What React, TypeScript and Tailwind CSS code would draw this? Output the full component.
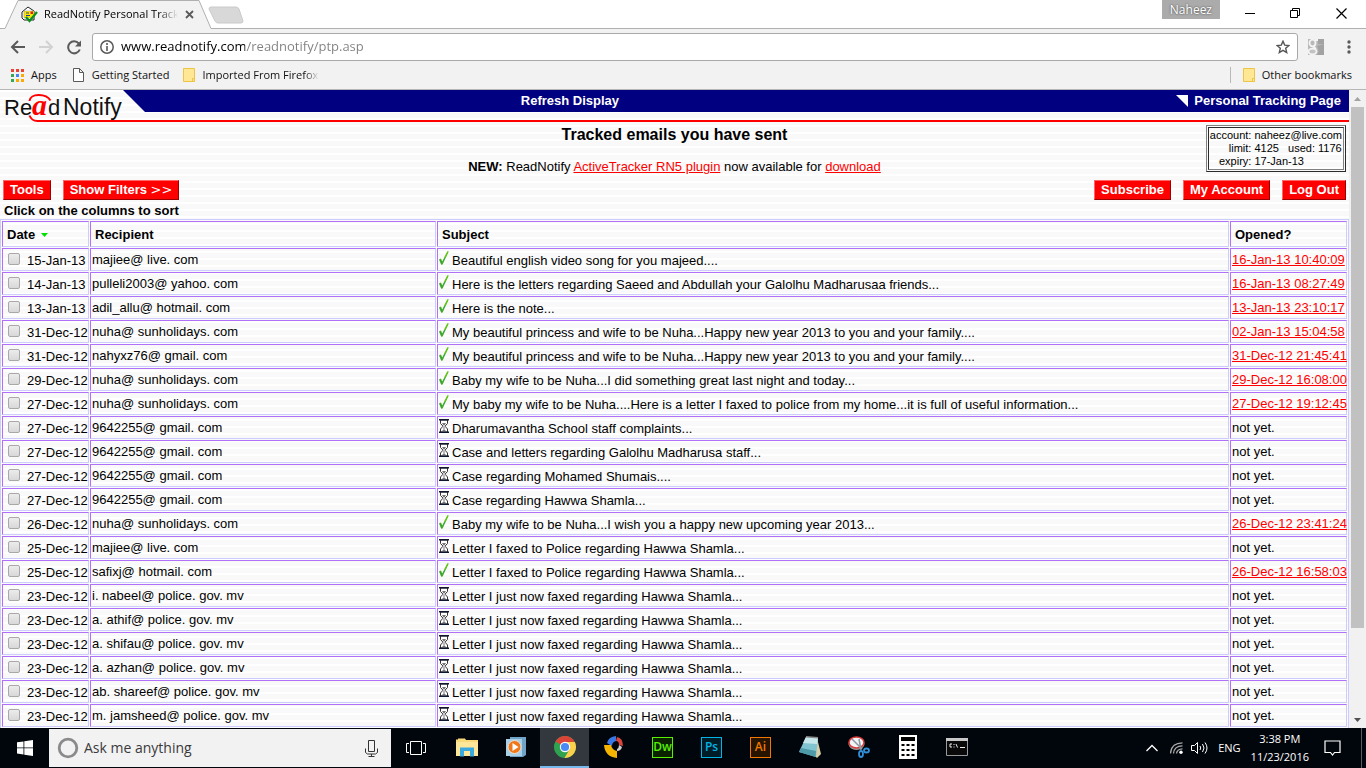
import type { ReactNode } from 'react'

type Row = { date: string; to: string; subject: string; opened?: string }

const ROWS: Row[] = [
  { date: '15-Jan-13', to: 'majiee@ live. com', subject: 'Beautiful english video song for you majeed....', opened: '16-Jan-13 10:40:09' },
  { date: '14-Jan-13', to: 'pulleli2003@ yahoo. com', subject: 'Here is the letters regarding Saeed and Abdullah your Galolhu Madharusaa friends...', opened: '16-Jan-13 08:27:49' },
  { date: '13-Jan-13', to: 'adil_allu@ hotmail. com', subject: 'Here is the note...', opened: '13-Jan-13 23:10:17' },
  { date: '31-Dec-12', to: 'nuha@ sunholidays. com', subject: 'My beautiful princess and wife to be Nuha...Happy new year 2013 to you and your family....', opened: '02-Jan-13 15:04:58' },
  { date: '31-Dec-12', to: 'nahyxz76@ gmail. com', subject: 'My beautiful princess and wife to be Nuha...Happy new year 2013 to you and your family....', opened: '31-Dec-12 21:45:41' },
  { date: '29-Dec-12', to: 'nuha@ sunholidays. com', subject: 'Baby my wife to be Nuha...I did something great last night and today...', opened: '29-Dec-12 16:08:00' },
  { date: '27-Dec-12', to: 'nuha@ sunholidays. com', subject: 'My baby my wife to be Nuha....Here is a letter I faxed to police from my home...it is full of useful information...', opened: '27-Dec-12 19:12:45' },
  { date: '27-Dec-12', to: '9642255@ gmail. com', subject: 'Dharumavantha School staff complaints...' },
  { date: '27-Dec-12', to: '9642255@ gmail. com', subject: 'Case and letters regarding Galolhu Madharusa staff...' },
  { date: '27-Dec-12', to: '9642255@ gmail. com', subject: 'Case regarding Mohamed Shumais....' },
  { date: '27-Dec-12', to: '9642255@ gmail. com', subject: 'Case regarding Hawwa Shamla...' },
  { date: '26-Dec-12', to: 'nuha@ sunholidays. com', subject: 'Baby my wife to be Nuha...I wish you a happy new upcoming year 2013...', opened: '26-Dec-12 23:41:24' },
  { date: '25-Dec-12', to: 'majiee@ live. com', subject: 'Letter I faxed to Police regarding Hawwa Shamla...' },
  { date: '25-Dec-12', to: 'safixj@ hotmail. com', subject: 'Letter I faxed to Police regarding Hawwa Shamla...', opened: '26-Dec-12 16:58:03' },
  { date: '23-Dec-12', to: 'i. nabeel@ police. gov. mv', subject: 'Letter I just now faxed regarding Hawwa Shamla...' },
  { date: '23-Dec-12', to: 'a. athif@ police. gov. mv', subject: 'Letter I just now faxed regarding Hawwa Shamla...' },
  { date: '23-Dec-12', to: 'a. shifau@ police. gov. mv', subject: 'Letter I just now faxed regarding Hawwa Shamla...' },
  { date: '23-Dec-12', to: 'a. azhan@ police. gov. mv', subject: 'Letter I just now faxed regarding Hawwa Shamla...' },
  { date: '23-Dec-12', to: 'ab. shareef@ police. gov. mv', subject: 'Letter I just now faxed regarding Hawwa Shamla...' },
  { date: '23-Dec-12', to: 'm. jamsheed@ police. gov. mv', subject: 'Letter I just now faxed regarding Hawwa Shamla...' },
]

const CELL = 'border border-t-[#b070f8] border-l-[#b070f8] border-r-[#ccccff] border-b-[#ccccff]'
const HEAD_CELL = `${CELL} px-1 pt-[2px]`

function Tick() {
  return (
    <svg width="10" height="15" viewBox="0 0 10 15" className="shrink-0">
      <path d="M0 8.5 L2 7.5 L3.2 10.5 L8.4 0.5 L9.6 0.5 L3.6 13.5 L2.2 13.8 Z" fill="#3fa82c" />
      <path d="M5.5 6 L8.4 0.5 L9.6 0.5 L6.8 6.5 Z" fill="#62c80a" />
    </svg>
  )
}

function Hourglass() {
  return (
    <svg width="10" height="15" viewBox="0 0 10 15" className="shrink-0">
      <path d="M1.500 1v3.500L4 7.200 1.500 10v3h7v-3L6 7.200l2.500-2.700V1z" fill="#fff" stroke="#333" />
      <path d="M3 4h4L5.500 6.500h-1zM4.500 8h1v2h-1zM3 12l2-2 2 2z" fill="#777" />
      <path d="M0 0h10v1.500H0zM0 12.500h10V14H0z" fill="#101830" />
    </svg>
  )
}

function RedButton({ children }: { children: ReactNode }) {
  return (
    <button className="h-5 border border-t-[#ff6666] border-l-[#ff6666] border-r-[#990000] border-b-[#990000] bg-[#ff0000] px-[6px] text-[13px] leading-[18px] font-bold text-white">
      {children}
    </button>
  )
}

function Folder() {
  return (
    <svg width="13" height="14" viewBox="0 0 13 14" className="shrink-0">
      <path d="M.5 .5h11v13h-11z" fill="#ffe793" stroke="#edc445" />
      <path d="M9.500 10.500h2v3h-2z" fill="#ffe793" stroke="#edc445" />
    </svg>
  )
}

function TabStrip() {
  return (
    <div className="flex h-[29px] items-stretch bg-white">
      <div className="grid w-[212px]">
        <svg width="212" height="29" viewBox="0 0 212 29" className="col-start-1 row-start-1">
          <path d="M0 28.500H5L18 .500H199L211 28.500H212V29H0z" fill="#f2f2f2" />
          <path d="M0 28.500H5L18 .500H199L211 28.500H212" fill="none" stroke="#b0b0b0" />
        </svg>
        <div className="col-start-1 row-start-1 flex items-center pl-[21px]">
          <svg width="18" height="17" viewBox="0 0 18 17" className="shrink-0">
            <path d="M1 6 L7 1 L13 5 V14 H3 L1 12z" fill="#fff" stroke="#222" />
            <path d="M3 5h10v7H3z" fill="#ffe800" stroke="#888" strokeWidth=".5" />
            <path d="M5 7h3M5 9.500h4" stroke="#2038a0" />
            <path d="M9.500 5.500h2.500v2.500H9.500z" fill="#e02020" />
            <path d="M5 11l3.500 4L16 6" fill="none" stroke="#0a9020" strokeWidth="2.200" />
          </svg>
          <span className="ml-[5px] w-[134px] overflow-hidden text-[11px] whitespace-nowrap [mask-image:linear-gradient(to_right,black_85%,transparent)]">
            ReadNotify Personal Track
          </span>
          <button aria-label="Close tab" className="ml-[7px]">
            <svg width="9" height="9" viewBox="0 0 9 9">
              <path d="M1 1l7 7M8 1L1 8" stroke="#5a5a5a" strokeWidth="1.800" />
            </svg>
          </button>
        </div>
      </div>
      <div className="flex flex-1 border-b border-[#b0b0b0]">
        <button aria-label="New tab" className="-ml-1 self-start pt-[6px]">
          <svg width="36" height="19" viewBox="0 0 36 19">
            <path d="M3 1h25q2 0 3 2l4 12q0 2-2 2H10q-2 0-3-2L1 3q0-2 2-2z" fill="#d8d8d8" stroke="#cacaca" />
          </svg>
        </button>
        <div className="ml-auto flex items-start">
          <button className="h-[19px] bg-[#ababab] px-2 text-xs leading-[18px] text-white [text-shadow:0_0_2px_#333]">Naheez</button>
          <button aria-label="Minimize" className="ml-[24px] grid h-[26px] w-[12px] place-items-center">
            <svg width="10" height="10"><path d="M0 5.500h10" stroke="#000" /></svg>
          </button>
          <button aria-label="Restore" className="ml-[33px] grid h-[26px] w-[12px] place-items-center">
            <svg width="10" height="10" fill="none" stroke="#000"><path d="M.5 2.500h7v7h-7zM2.500 2V.500h7v7H8" /></svg>
          </button>
          <button aria-label="Close" className="mr-[19px] ml-[34px] grid h-[26px] w-[12px] place-items-center">
            <svg width="11" height="11"><path d="M.5 .5l10 10M10.500 .5l-10 10" stroke="#000" strokeWidth="1.200" /></svg>
          </button>
        </div>
      </div>
    </div>
  )
}

function Toolbar() {
  return (
    <div className="flex h-9 items-center bg-[#f2f2f2] pl-[10px]">
      <button aria-label="Back">
        <svg width="16" height="14" viewBox="0 0 16 14" fill="none" stroke="#5a5a5a" strokeWidth="2"><path d="M15 7H2M8 1L2 7l6 6" /></svg>
      </button>
      <button aria-label="Forward" className="ml-[13px]">
        <svg width="16" height="14" viewBox="0 0 16 14" fill="none" stroke="#d2d2d2" strokeWidth="2"><path d="M0 7h13M7 1l6 6-6 6" /></svg>
      </button>
      <button aria-label="Reload" className="ml-3">
        <svg width="15" height="15" viewBox="0 0 15 15">
          <path d="M12.800 9.500A6 6 0 1 1 11.800 3.500" fill="none" stroke="#5a5a5a" strokeWidth="2" />
          <path d="M14 .5v6H8z" fill="#5a5a5a" />
        </svg>
      </button>
      <div className="ml-[10px] flex h-7 flex-1 items-center rounded-[3px] border border-[#a9a9a9] bg-white px-[7px]">
        <svg width="14" height="14" viewBox="0 0 14 14" fill="none" stroke="#5a5a5a" className="shrink-0">
          <circle cx="7" cy="7" r="6.200" strokeWidth="1.500" />
          <path d="M7 6v5M7 3v2" strokeWidth="1.600" />
        </svg>
        <input
          aria-label="Address"
          defaultValue="www.readnotify.com/readnotify/ptp.asp"
          className="ml-[7px] flex-1 bg-[linear-gradient(to_right,#000_124px,#808080_124px)] bg-clip-text text-[13px] text-transparent outline-none"
        />
        <button aria-label="Bookmark this page">
          <svg width="14" height="14" viewBox="0 0 14 14" fill="none" stroke="#555" strokeWidth="1.400">
            <path d="M7 1.200l1.700 3.900 4.200.4-3.200 2.800 1 4.200L7 10.300l-3.700 2.200 1-4.200L1.100 5.500l4.200-.4z" />
          </svg>
        </button>
      </div>
      <button aria-label="Google extension" className="ml-[10px]">
        <svg width="16" height="16" viewBox="0 0 16 16">
          <path d="M0 0h16v16H0z" fill="#b8b8b8" />
          <path d="M10 0h6v5h-6zM9 7l7-2v11H9q3-4 0-9z" fill="#a2a2a2" />
          <ellipse cx="4.500" cy="4" rx="3" ry="3.300" fill="#b8b8b8" stroke="#f4f4f4" strokeWidth="1.800" />
          <ellipse cx="4.500" cy="12.500" rx="4" ry="2.800" fill="#c2c2c2" stroke="#f4f4f4" strokeWidth="1.800" />
          <path d="M5 7.500l3 2.500M7 1h3" stroke="#f4f4f4" strokeWidth="1.800" />
        </svg>
      </button>
      <button aria-label="Menu" className="mr-[15px] ml-[23px]">
        <svg width="4" height="14" viewBox="0 0 4 14" fill="#5a5a5a"><circle cx="2" cy="2" r="1.700" /><circle cx="2" cy="7" r="1.700" /><circle cx="2" cy="12" r="1.700" /></svg>
      </button>
    </div>
  )
}

const APP_DOTS = ['#ea4335', '#ea4335', '#ea4335', '#34a853', '#4285f4', '#fbaa05', '#34a853', '#fbaa05', '#fbaa05']

function Bookmarks() {
  return (
    <div className="flex h-[25px] items-start border-b border-[#b6b6b6] bg-[#f2f2f2] pl-[11px] text-[11px] leading-5 text-[#111]">
      <a href="#apps" className="flex items-center">
        <span className="grid grid-cols-3 gap-[2px]">
          {APP_DOTS.map((c, i) => <span key={i} className="size-[3px]" style={{ background: c }} />)}
        </span>
        <span className="ml-[7px]">Apps</span>
      </a>
      <a href="#start" className="ml-4 flex items-center">
        <svg width="11" height="14" viewBox="0 0 11 14" fill="#fff" stroke="#5a5a5a"><path d="M.5 .5h6l4 4v9H.500zM6.500 .5v4h4" /></svg>
        <span className="ml-2">Getting Started</span>
      </a>
      <a href="#imported" className="ml-[14px] flex items-center">
        <Folder />
        <span className="ml-[6px] w-[117px] overflow-hidden whitespace-nowrap [mask-image:linear-gradient(to_right,black_88%,transparent)]">Imported From Firefox</span>
      </a>
      <a href="#other" className="mr-[14px] ml-auto flex items-center">
        <span className="mr-3 h-4 w-px bg-[#b8b8b8]" />
        <Folder />
        <span className="ml-[6px]">Other bookmarks</span>
      </a>
    </div>
  )
}

function PageHeader() {
  return (
    <header className="flex h-8">
      <svg width="145" height="32" viewBox="0 0 145 32" className="shrink-0 overflow-visible">
        <path d="M123 0h22v22z" fill="#000080" />
        <path d="M29.500 11C30 3 46 3 50.500 10.500M29.500 25.500q2 5.500 8 5.500H145" fill="none" stroke="#ff0000" strokeWidth="2" />
        <g fontFamily="'Liberation Sans', sans-serif" fill="#111">
          <text x="4" y="25" fontSize="22">Re</text>
          <text x="48" y="25" fontSize="22">d</text>
          <text x="63" y="25" fontSize="23">Notify</text>
        </g>
        <text x="32" y="25" fontFamily="'Liberation Serif', serif" fontStyle="italic" fontWeight="bold" fontSize="30" fill="#ff0000">a</text>
      </svg>
      <div className="flex min-w-0 flex-1 flex-col justify-between border-b-2 border-[#ff0000]">
        <div className="grid h-[22px] grid-cols-[12fr_5fr] items-center bg-[#000080] text-[13px] font-bold text-white">
          <a href="#refresh" className="justify-self-center">Refresh Display</a>
          <span className="mr-2 flex items-center justify-self-end">
            <svg width="12" height="12" className="mr-[6px]"><path d="M0 0h12v12z" fill="#fff" /></svg>
            Personal Tracking Page
          </span>
        </div>
      </div>
    </header>
  )
}

function AccountBox() {
  return (
    <div className="justify-self-end border border-t-[#808080] border-l-[#808080] border-r-[#2c2c2c] border-b-[#2c2c2c] p-px">
      <dl className="grid grid-cols-[auto_auto] gap-x-[3px] border border-t-[#2c2c2c] border-l-[#2c2c2c] border-r-[#808080] border-b-[#808080] px-px py-px text-[11px] leading-[13px] whitespace-pre">
        <dt className="text-right">account:</dt><dd>naheez@live.com</dd>
        <dt className="text-right">limit:</dt><dd>4125   used: 1176</dd>
        <dt className="text-right">expiry:</dt><dd>17-Jan-13</dd>
      </dl>
    </div>
  )
}

function TrackedTable() {
  return (
    <table className="w-full table-fixed border-separate border-spacing-px border border-[#ccccff]">
      <colgroup>
        <col className="w-[87px]" />
        <col className="w-[346px]" />
        <col />
        <col className="w-[117px]" />
      </colgroup>
      <thead>
        <tr className="h-[26px] text-left">
          <th className={HEAD_CELL}>
            <span className="flex items-center gap-[6px]">
              Date
              <svg width="7" height="4"><path d="M0 0h7L3.500 4z" fill="#00e000" /></svg>
            </span>
          </th>
          <th className={HEAD_CELL}>Recipient</th>
          <th className={HEAD_CELL}>Subject</th>
          <th className={HEAD_CELL}>Opened?</th>
        </tr>
      </thead>
      <tbody className="leading-5 whitespace-nowrap">
        {ROWS.map((r, i) => (
          <tr key={i} className="h-[23px]">
            <td className={`${CELL} pl-[5px]`}>
              <label className="flex items-start leading-[18px]">
                <input type="checkbox" className="mt-1 mr-[7px] size-3 shrink-0 appearance-none rounded-[2px] border border-[#a8a8a8] bg-linear-to-b from-[#ececec] to-[#d8d8d8]" />
                <span className="pt-[3px]">{r.date}</span>
              </label>
            </td>
            <td className={`${CELL} pl-px`}>{r.to}</td>
            <td className={`${CELL} pl-px`}>
              <span className="flex items-start gap-[3px] leading-[18px]">
                <span className="pt-[2px]">{r.opened ? <Tick /> : <Hourglass />}</span>
                <span className="pt-[3px]">{r.subject}</span>
              </span>
            </td>
            <td className={`${CELL} pl-px`}>
              {r.opened ? <a href="#opened" className="text-[#ff0000] underline">{r.opened}</a> : 'not yet.'}
            </td>
          </tr>
        ))}
      </tbody>
    </table>
  )
}

function Scrollbar() {
  return (
    <div className="flex w-[17px] shrink-0 flex-col items-center bg-[#f1f1f1]">
      <span className="grid h-[17px] place-items-center"><svg width="7" height="4"><path d="M0 4h7L3.500 0z" fill="#a3a3a3" /></svg></span>
      <span className="w-[13px] basis-[521px] bg-[#c1c1c1]" />
      <span className="mt-auto grid h-[17px] place-items-center"><svg width="7" height="4"><path d="M0 0h7L3.500 4z" fill="#505050" /></svg></span>
    </div>
  )
}

function Adobe({ label, color, bg }: { label: string; color: string; bg: string }) {
  return (
    <span className="grid size-[21px] place-items-center border text-xs leading-none font-semibold" style={{ color, borderColor: color, background: bg }}>
      {label}
    </span>
  )
}

const APPS: { name: string; icon: ReactNode; active?: boolean }[] = [
  {
    name: 'File Explorer',
    icon: (
      <svg width="22" height="19" viewBox="0 0 22 19">
        <path d="M0 1.500h2V.500h7l1 1.500h12v16H0z" fill="#f9d978" />
        <path d="M0 4h22v14H0z" fill="#ffe79a" />
        <path d="M4 9.500h14V18.500h-4V13H8v5.500H4z" fill="#3aa9e0" />
      </svg>
    ),
  },
  {
    name: 'Media Player',
    icon: (
      <svg width="20" height="20" viewBox="0 0 20 20">
        <path d="M4 0h16v18l-3 2H4z" fill="#6fa3c8" />
        <path d="M0 2h16v17H0z" fill="#a9cfe8" />
        <circle cx="8.500" cy="10" r="6.500" fill="#f07818" stroke="#e8e0d8" />
        <path d="M6.500 6l6 4-6 4z" fill="#fff" />
      </svg>
    ),
  },
  {
    name: 'Chrome',
    active: true,
    icon: (
      <svg width="22" height="22" viewBox="0 0 22 22">
        <circle cx="11" cy="11" r="11" fill="#2fa24f" />
        <path d="M11 11L1.500 5.500A11 11 0 0 1 20.500 5.500z" fill="#dc4437" />
        <path d="M11 6H20.800A11 11 0 0 1 10.500 22l5-8.500z" fill="#fcd04a" />
        <circle cx="11" cy="11" r="5.200" fill="#fff" />
        <circle cx="11" cy="11" r="4.100" fill="#4a8af4" />
      </svg>
    ),
  },
  {
    name: 'Canary',
    icon: (
      <svg width="20" height="22" viewBox="0 0 20 22">
        <path d="M3 7A10 9 0 0 1 12 0v5q-4 1-4 5z" fill="#3b78e7" />
        <path d="M13 1q6 1 6 9l-4-1q0-4-3-4z" fill="#d8453a" />
        <path d="M0 9h7q1 5 6 6v7Q1 21 0 9z" fill="#f4b400" />
        <path d="M18 11q-1 4-5 4v-2q2-1 2-4z" fill="#d0d0d0" />
      </svg>
    ),
  },
  { name: 'Dreamweaver', icon: <Adobe label="Dw" color="#57f000" bg="#0a2200" /> },
  { name: 'Photoshop', icon: <Adobe label="Ps" color="#00b4e4" bg="#001c26" /> },
  { name: 'Illustrator', icon: <Adobe label="Ai" color="#f07800" bg="#261300" /> },
  {
    name: 'Notepad',
    icon: (
      <svg width="24" height="22" viewBox="0 0 24 22">
        <path d="M19 2l4 16-4 4-2-2z" fill="#d8cfa8" />
        <path d="M8 1l12 1-2 19L1 16z" fill="#7fc4d0" />
        <path d="M8 1l12 1-1 6L5 7z" fill="#c6e8ec" />
        <path d="M3 12l15 3-.5 6L1 16z" fill="#4d99a8" />
        <path d="M8 .8l12 1" stroke="#888" strokeWidth="1.500" />
      </svg>
    ),
  },
  {
    name: 'Snipping Tool',
    icon: (
      <svg width="22" height="22" viewBox="0 0 22 22" fill="none">
        <ellipse cx="8.500" cy="8" rx="8" ry="6" fill="#9b9b9b" />
        <ellipse cx="8.500" cy="6.500" rx="7.500" ry="5.500" fill="#f4f4f4" stroke="#d83a3a" strokeWidth="1.500" />
        <path d="M4 3l10 10M11 3l2 11" stroke="#8b9aa5" strokeWidth="1.500" />
        <ellipse cx="13" cy="18" rx="2" ry="3" stroke="#2f8fd8" strokeWidth="1.800" />
        <ellipse cx="18.500" cy="14.500" rx="2.500" ry="2" stroke="#2f8fd8" strokeWidth="1.800" />
      </svg>
    ),
  },
  {
    name: 'Calculator',
    icon: (
      <svg width="18" height="24" viewBox="0 0 18 24">
        <path d="M0 0h18v24H0z" fill="#fff" />
        <path d="M2 2h14v4H2zM2.500 9h3v2h-3zM7.500 9h3v2h-3zM12.500 9h3v2h-3zM2.500 14h3v2h-3zM7.500 14h3v2h-3zM12.500 14h3v2h-3zM2.500 19h3v2h-3zM7.500 19h3v2h-3zM12.500 19h3v2h-3z" fill="#000" />
      </svg>
    ),
  },
  {
    name: 'Command Prompt',
    icon: (
      <svg width="22" height="18" viewBox="0 0 22 18">
        <path d="M.5 .5h21v17H.500z" fill="#0a0a0a" stroke="#9a9a9a" />
        <path d="M0 0h22v3H0z" fill="#c8c8c8" />
        <path d="M6 6H4v3h2M8 6v1M8 8.500v1M10 6l1.500 3.500M14 9.500h5" fill="none" stroke="#eee" />
      </svg>
    ),
  },
]

function Taskbar() {
  return (
    <footer className="flex h-10 shrink-0 items-stretch bg-[#01060c] font-['Open_Sans',sans-serif] text-white">
      <button aria-label="Start" className="grid w-[49px] place-items-center">
        <svg width="16" height="16" viewBox="0 0 16 16" fill="#fff">
          <path d="M0 2.300L6.500 1.400V7.500H0zM7.300 1.300L16 0v7.500H7.300zM0 8.300h6.500v6.200L0 13.600zM7.300 8.300H16V16l-8.700-1.300z" />
        </svg>
      </button>
      <div className="mt-px mb-px flex w-[342px] items-center bg-[#f2f2f2] px-2">
        <svg width="22" height="22" className="shrink-0"><circle cx="11" cy="11" r="8.800" fill="none" stroke="#8a8a8a" strokeWidth="2.800" /></svg>
        <input aria-label="Search" placeholder="Ask me anything" className="ml-[5px] min-w-0 flex-1 text-sm outline-none placeholder:text-[#3a3a3a]" />
        <button aria-label="Dictate" className="mr-[5px]">
          <svg width="13" height="17" viewBox="0 0 13 17" fill="none" stroke="#333"><path d="M3.500 .5h6v11h-6zM.500 8.500v4l2 1.500h8l2-1.500v-4M6.500 14v2.500M3.500 16.500h6" /></svg>
        </button>
      </div>
      <button aria-label="Task view" className="grid w-[51px] place-items-center pr-[2px]">
        <svg width="20" height="14" viewBox="0 0 20 14" fill="none" stroke="#fff"><path d="M4.500 .500h11v13h-11zM3 2.500H.500v9H3M17 2.500h2.500v9H17" /></svg>
      </button>
      {APPS.map(a => (
        <button key={a.name} aria-label={a.name} className={`grid w-[49px] place-items-center border-b-2 ${a.active ? 'border-[#76b9ed] bg-[#33383e]' : 'border-transparent'}`}>
          {a.icon}
        </button>
      ))}
      <div className="ml-auto flex items-center text-[11px]">
        <button aria-label="Show hidden icons">
          <svg width="12" height="8" fill="none" stroke="#fff" strokeWidth="1.300"><path d="M.5 7L6 1.500 11.500 7" /></svg>
        </button>
        <svg width="13" height="12" viewBox="0 0 13 12" fill="none" className="ml-3">
          <path d="M.5 11.500Q1 1 12.500 .800M3.500 11.500Q4 4 12.500 3.800M6.500 11.500Q7 7 12.500 6.800" stroke="#aaa" strokeWidth="1.300" />
          <circle cx="11" cy="10.300" r="1.700" fill="#fff" />
        </svg>
        <svg width="17" height="14" viewBox="0 0 17 14" fill="none" stroke="#fff" className="ml-2">
          <path d="M.5 4.500h3l3-3v11l-3-3h-3zM9 5q1.500 2 0 4M11.500 3q3 4 0 8M14 1.500q4 5.500 0 11" />
        </svg>
        <span className="ml-[10px]">ENG</span>
        <div className="ml-[10px] text-center leading-[18px]">
          <div>3:38 PM</div>
          <div>11/23/2016</div>
        </div>
        <button aria-label="Notifications" className="ml-[15px]">
          <svg width="17" height="17" viewBox="0 0 17 17" fill="none" stroke="#fff" strokeWidth="1.200"><path d="M1 1h15v11.500h-5.500L8.500 15l-2-2.500H1z" /></svg>
        </button>
        <span className="mr-1 ml-5 h-10 w-px bg-[#5a5f63]" />
      </div>
    </footer>
  )
}

export default function App() {
  return (
    <div className="flex h-screen flex-col overflow-hidden">
      <div className="shrink-0 font-['Open_Sans',sans-serif]">
        <TabStrip />
        <Toolbar />
        <Bookmarks />
      </div>

      <div className="flex min-h-0 flex-1">
        <main className="min-w-0 flex-1 overflow-hidden bg-[repeating-linear-gradient(to_bottom,#fff_0px,#fff_2px,#f9f9f9_2px,#f9f9f9_7px)] font-['Liberation_Sans',Arial,sans-serif] text-[13px] text-black">
          <PageHeader />
          <section className="grid grid-cols-[1fr_auto_1fr] items-start px-[3px] pt-[3px]">
            <span />
            <div className="text-center leading-5">
              <h1 className="text-base leading-5 font-bold">Tracked emails you have sent</h1>
              <p className="mt-3">
                <b>NEW:</b> ReadNotify <a href="#plugin" className="text-[#ff0000] underline">ActiveTracker RN5 plugin</a> now available for{' '}
                <a href="#download" className="text-[#ff0000] underline">download</a>
              </p>
            </div>
            <AccountBox />
          </section>
          <div className="flex gap-3 px-[3px] pt-[3px]">
            <RedButton>Tools</RedButton>
            <RedButton>
              Show Filters <span className="font-['DejaVu_Sans',sans-serif] font-normal">&gt;&gt;</span>
            </RedButton>
            <span className="flex-1" />
            <RedButton>Subscribe</RedButton>
            <RedButton>My Account</RedButton>
            <RedButton>Log Out</RedButton>
          </div>
          <p className="pt-[3px] pl-1 leading-4 font-bold">Click on the columns to sort</p>
          <TrackedTable />
        </main>
        <Scrollbar />
      </div>

      <Taskbar />
    </div>
  )
}
